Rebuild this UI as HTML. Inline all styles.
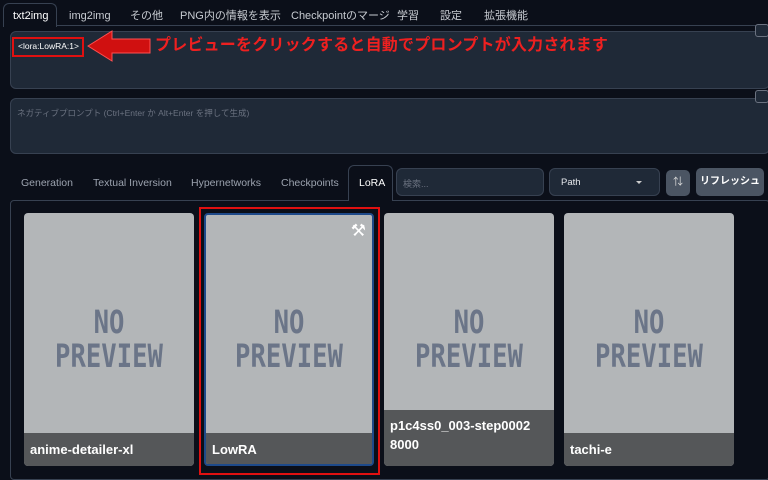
<!DOCTYPE html><html><head><meta charset="utf-8"><style>
*{box-sizing:border-box;margin:0;padding:0}
body{width:768px;height:477px;background:#0b0f19;font-family:"Liberation Sans","Noto Sans CJK JP",sans-serif;position:relative;overflow:hidden;color:#d1d5db}
.a{position:absolute}
.tab{position:absolute;top:9px;font-size:11px;line-height:14px;color:#c7cbd1}
.box{position:absolute;background:#1f2937;border:1px solid #374151;border-radius:6px}
.st{position:absolute;top:177px;font-size:10.5px;line-height:13px;color:#9ca3af}
.card{position:absolute;top:213px;width:170px;height:253px;background:#b3b6b8;border-radius:4px;overflow:hidden}
.cap{position:absolute;left:0;right:0;bottom:0;background:#555759;color:#fff;font-weight:bold;font-size:13px;padding:0 6px}
.np{position:absolute;left:0;width:170px;text-align:center;font-family:"DejaVu Sans Mono",monospace;color:#6b7588;font-weight:bold;letter-spacing:0px;transform:scaleX(0.8)}
</style></head><body>
<div class="a" style="left:3px;top:3px;width:54px;height:24px;border:1px solid #374151;border-bottom:none;border-radius:6px 6px 0 0;background:#0b0f19"></div>
<div class="a" style="left:57px;top:25px;width:711px;height:1px;background:#374151"></div>
<div class="tab" style="left:13px;color:#fff">txt2img</div>
<div class="tab" style="left:69px">img2img</div>
<div class="tab" style="left:130px">その他</div>
<div class="tab" style="left:180px">PNG内の情報を表示</div>
<div class="tab" style="left:291px">Checkpointのマージ</div>
<div class="tab" style="left:397px">学習</div>
<div class="tab" style="left:440px">設定</div>
<div class="tab" style="left:484px">拡張機能</div>
<div class="box" style="left:10px;top:31px;width:760px;height:58px"></div>
<div class="box" style="left:10px;top:98px;width:760px;height:56px"></div>
<div class="a" style="left:755px;top:24px;width:14px;height:13px;border:1px solid #6b7280;border-radius:3px;background:#1f2937"></div>
<div class="a" style="left:755px;top:90px;width:14px;height:13px;border:1px solid #6b7280;border-radius:3px;background:#1f2937"></div>
<div class="a" style="left:17px;top:107px;font-size:8.5px;color:#6b7280">ネガティブプロンプト (Ctrl+Enter か Alt+Enter を押して生成)</div>
<div class="a" style="left:12px;top:37px;width:72px;height:20px;border:2px solid #e01010"></div>
<div class="a" style="left:18px;top:41px;font-size:8.5px;color:#fff">&lt;lora:LowRA:1&gt;</div>
<svg class="a" style="left:86px;top:29px" width="68" height="34"><polygon points="2,17 26,2 26,10 64,10 64,24 26,24 26,32" fill="#d01010" stroke="#ff5050" stroke-width="1"/></svg>
<div class="a" style="left:155px;top:36px;font-size:16px;font-weight:bold;color:#ee2020;letter-spacing:0.2px;line-height:20px">プレビューをクリックすると自動でプロンプトが入力されます</div>
<div class="st" style="left:21px">Generation</div>
<div class="st" style="left:93px">Textual Inversion</div>
<div class="st" style="left:191px">Hypernetworks</div>
<div class="st" style="left:281px">Checkpoints</div>
<div class="a" style="left:348px;top:165px;width:45px;height:36px;border:1px solid #374151;border-bottom:none;border-radius:6px 6px 0 0;background:#0b0f19;z-index:2"></div>
<div class="st" style="left:359px;color:#fff;z-index:3">LoRA</div>
<div class="a" style="left:10px;top:200px;width:760px;height:280px;border:1px solid #374151;border-radius:4px"></div>
<div class="box" style="left:396px;top:168px;width:148px;height:28px"></div>
<div class="a" style="left:403px;top:177px;font-size:9px;color:#6b7280">検索...</div>
<div class="box" style="left:549px;top:168px;width:111px;height:28px"></div>
<div class="a" style="left:561px;top:177px;font-size:9.5px;color:#e5e7eb">Path</div>
<div class="a" style="left:636px;top:181px;border:3px solid transparent;border-top:3px solid #ccc"></div>
<div class="a" style="left:666px;top:170px;width:24px;height:26px;background:#4b5563;border-radius:5px;color:#ddd;font-size:10px;text-align:center;line-height:26px">⇅</div>
<div class="a" style="left:696px;top:168px;width:68px;height:28px;background:#4b5563;border-radius:5px;color:#fff;font-size:10px;font-weight:bold;text-align:center;line-height:28px">リフレッシュ</div>

<div class="card" style="left:24px"><div class="np" style="top:90px;font-size:32px">NO</div><div class="np" style="top:124px;font-size:32px">PREVIEW</div><div class="cap" style="top:220px;line-height:33px">anime-detailer-xl</div></div>
<div class="card" style="left:204px;border:2px solid #1e4a8a"><div class="np" style="top:88px;font-size:32px;left:-2px">NO</div><div class="np" style="top:122px;font-size:32px;left:-2px">PREVIEW</div><div class="a" style="right:6px;top:6px;color:#fff;font-size:17px">⚒</div><div class="cap" style="top:218px;line-height:33px">LowRA</div></div>
<div class="card" style="left:384px"><div class="np" style="top:90px;font-size:32px">NO</div><div class="np" style="top:124px;font-size:32px">PREVIEW</div><div class="cap" style="top:197px;padding-top:6px;line-height:19px">p1c4ss0_003-step0002<br>8000</div></div>
<div class="card" style="left:564px"><div class="np" style="top:90px;font-size:32px">NO</div><div class="np" style="top:124px;font-size:32px">PREVIEW</div><div class="cap" style="top:220px;line-height:33px">tachi-e</div></div>
<div class="a" style="left:199px;top:207px;width:181px;height:268px;border:2px solid #e01010"></div>
</body></html>
